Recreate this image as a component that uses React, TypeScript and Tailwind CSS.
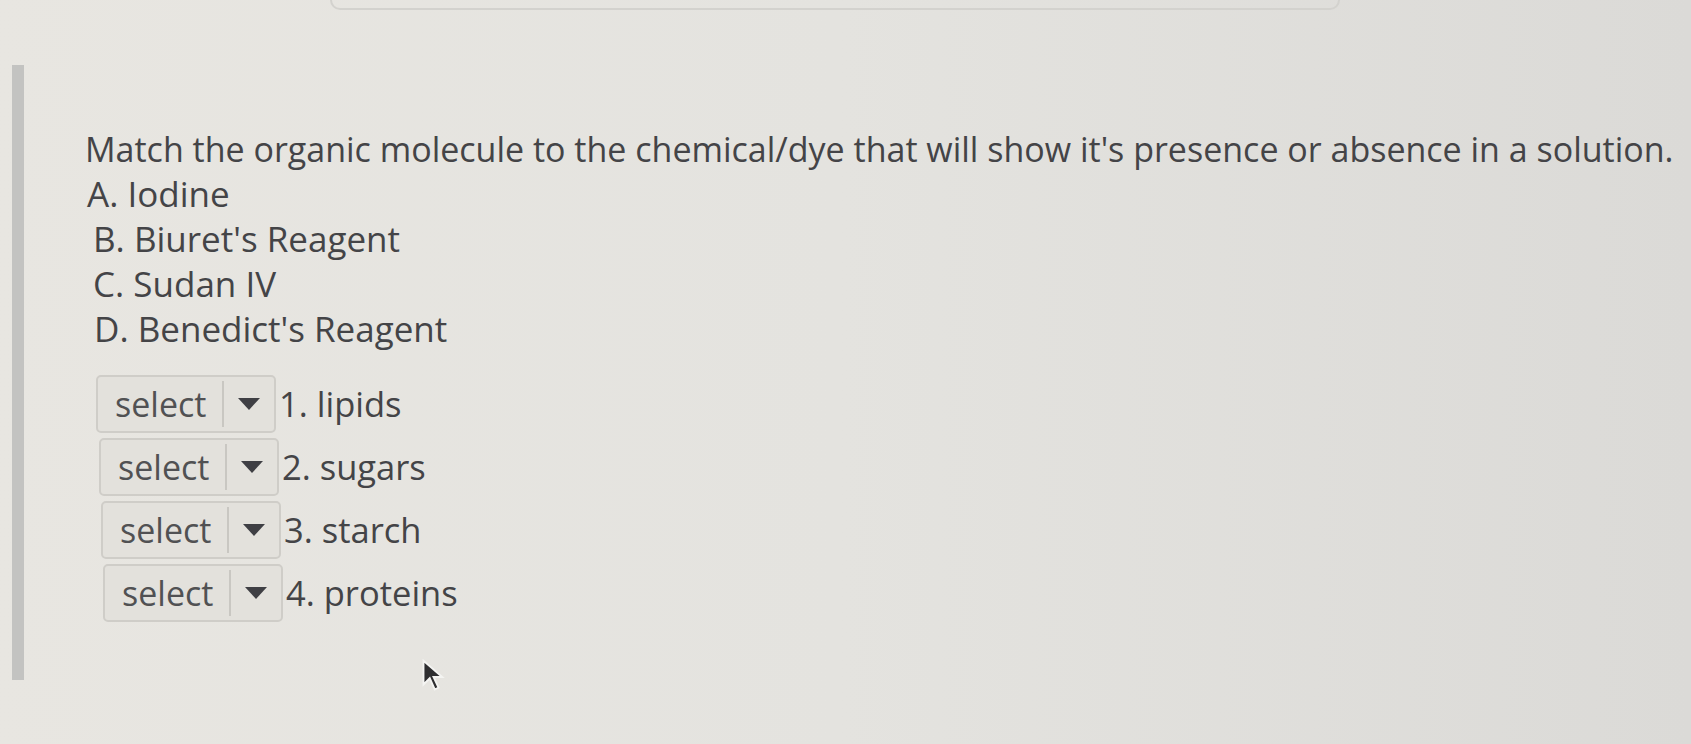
import React from "react";

const options = [
  { text: "A. Iodine", shift: "ml-[2px]" },
  { text: "B. Biuret's Reagent", shift: "ml-[8px]" },
  { text: "C. Sudan IV", shift: "ml-[8px]" },
  { text: "D. Benedict's Reagent", shift: "ml-[9px]" },
];
const targets = ["1. lipids", "2. sugars", "3. starch", "4. proteins"];
const shifts = ["ml-[11px]", "ml-[14px]", "ml-[16px]", "ml-[18px]"];

function SelectBox() {
  return (
    <div className="flex h-[58px] w-[180px] items-center rounded-[5px] border-2 border-[#cfcdc8] bg-[#e3e1dc]">
      <span className="pl-[17px] text-[34px] leading-none text-[#515153]">select</span>
      <span className="ml-[16px] h-[46px] w-[2px] bg-[#c9c7c2]" />
      <svg className="ml-[13px]" width="24" height="14" viewBox="0 0 24 14">
        <path d="M1 1 L23 1 L12 13 Z" fill="#3f3f44" />
      </svg>
    </div>
  );
}

export default function App() {
  return (
    <div
      className="relative h-[744px] w-[1691px] overflow-hidden bg-gradient-to-r from-[#e8e6e1] via-[#e4e3df] to-[#dbdad7]"
      style={{ fontFamily: '"Open Sans", "Noto Sans", sans-serif' }}
    >
      {/* frame edge at the top */}
      <div className="absolute left-[330px] top-[-20px] h-[30px] w-[1010px] rounded-b-[10px] border-2 border-[#d3d2ce]" />

      <div className="flex">
        <div className="ml-[12px] mt-[65px] h-[615px] w-[12px] bg-[#c3c3c1]" />
        <div className="ml-[61px] mt-[128px] text-[#444447]">
          <p className="text-[34px] leading-[43px]">
            Match the organic molecule to the chemical/dye that will show it's presence or absence in a solution.
          </p>
          {options.map((o) => (
            <p key={o.text} className={`text-[35px] leading-[45px] ${o.shift}`}>
              {o.text}
            </p>
          ))}
          <div className="mt-[24px] flex flex-col gap-[5px]">
            {targets.map((t, i) => (
              <div key={t} className={`flex items-center ${shifts[i]}`}>
                <SelectBox />
                <span className="ml-[3px] text-[34.5px] leading-none">{t}</span>
              </div>
            ))}
          </div>
        </div>
      </div>

      {/* mouse pointer */}
      <svg className="absolute left-[421px] top-[659px]" width="30" height="36" viewBox="0 0 24 28">
        <path d="M2 1 L2 20 L7 15 L11 24 L14 22.5 L10 14 L17 14 Z" fill="#2e2e30" stroke="#f4f4f2" strokeWidth="1.5" />
      </svg>
    </div>
  );
}
